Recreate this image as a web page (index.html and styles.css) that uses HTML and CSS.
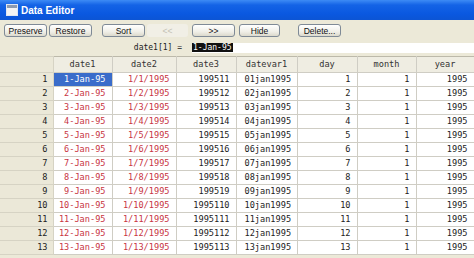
FILE: index.html
```html
<!DOCTYPE html>
<html lang="en">
<head>
    <meta charset="UTF-8">
    <title>Data Editor</title>
    <link rel="stylesheet" href="styles.css">
</head>
<body>
    <div class="window">
        <div class="titlebar">
            <span class="title-icon"></span>
            <span class="title-text">Data Editor</span>
        </div>
        <div class="toolbar">
            <button class="btn">Preserve</button>
            <button class="btn">Restore</button>
            <button class="btn gap-lg">Sort</button>
            <button class="btn disabled">&lt;&lt;</button>
            <button class="btn">&gt;&gt;</button>
            <button class="btn hide">Hide</button>
            <button class="btn gap-xl">Delete...</button>
        </div>
        <div class="editbar">
            <span class="edit-label">date1[1] =</span>
            <div class="edit-input"><span class="selected">1-Jan-95</span></div>
        </div>
        <table class="grid">
            <colgroup>
                <col style="width:53px"><col style="width:59px"><col style="width:64px"><col style="width:60px">
                <col style="width:61px"><col style="width:60px"><col style="width:59px"><col style="width:58px">
            </colgroup>
            <thead>
                <tr>
                    <th class="rownum"></th>
                    <th>date1</th>
                    <th>date2</th>
                    <th>date3</th>
                    <th>datevar1</th>
                    <th>day</th>
                    <th>month</th>
                    <th>year</th>
                </tr>
            </thead>
            <tbody id="rows">
                <!-- rows filled in below -->
            </tbody>
        </table>
    </div>

    <script>
        const tbody = document.getElementById('rows');
        for (let i = 1; i <= 13; i++) {
            const dd = (i < 10 ? '0' : '') + i;
            const row = `
                <tr>
                    <td class="rownum">${i}</td>
                    <td class="red ${i === 1 ? 'current' : ''}">${i}-Jan-95</td>
                    <td class="red">1/${i}/1995</td>
                    <td>19951${i}</td>
                    <td class="left">${dd}jan1995</td>
                    <td>${i}</td>
                    <td>1</td>
                    <td>1995</td>
                </tr>
            `;
            tbody.innerHTML += row;
        }
    </script>
</body>
</html>
```

FILE: styles.css
```css
body {
    margin: 0;
    padding: 0;
    background-color: #ece9d8;
    font-family: "Liberation Sans", Arial, sans-serif;
}
.window {
    width: 474px;
    height: 258px;
    overflow: hidden;
    background-color: #ece9d8;
}
.titlebar {
    height: 20px;
    display: flex;
    align-items: center;
    background: linear-gradient(#3d8bf5 0%, #1463e6 25%, #0a58e0 70%, #0c55d4 100%);
}
.title-icon {
    width: 10px;
    height: 10px;
    margin: 0 3px 0 6px;
    background: linear-gradient(#8c9ab0 0 3px, #f4f4f4 3px);
    border: 1px solid #dfe6f2;
}
.title-text {
    color: white;
    font-weight: bold;
    font-size: 10px;
}
.toolbar {
    height: 21px;
    display: flex;
    align-items: center;
    padding-left: 4px;
    background-color: #ece9d8;
}
.btn {
    width: 43px;
    height: 13px;
    margin-right: 2px;
    padding: 0;
    font-family: "Liberation Sans", Arial, sans-serif;
    font-size: 8.5px;
    color: #111;
    border: 1px solid #7f8a96;
    border-radius: 3px;
    background: linear-gradient(#ffffff, #f0efe8 60%, #dcd9cc);
}
.btn.gap-lg {
    margin-left: 8px;
}
.btn.disabled {
    color: #c4c1b4;
    border-color: transparent;
    background: #f1efe6;
    width: 41px;
    margin-right: 4px;
}
.btn.hide {
    width: 41px;
    margin-left: 2px;
}
.btn.gap-xl {
    margin-left: 16px;
}
.editbar {
    height: 15px;
    display: flex;
    align-items: flex-start;
    font-family: "DejaVu Sans Mono", monospace;
    font-size: 8px;
}
.edit-label {
    width: 182px;
    padding-right: 10px;
    text-align: right;
    line-height: 12px;
    margin-top: 1px;
    color: #222;
}
.edit-input {
    flex: 1;
    height: 10px;
    margin-top: 2px;
    background: white;
    line-height: 10px;
}
.selected {
    background: #111;
    color: white;
    padding: 0 1px;
}
.grid {
    width: 474px;
    table-layout: fixed;
    border-collapse: collapse;
    font-family: "DejaVu Sans Mono", monospace;
    font-size: 8.6px;
}
.grid th, .grid td {
    height: 13px;
    padding: 0 6px 0 0;
    line-height: 13px;
    border: 1px solid #cfcdc4;
    text-align: right;
    white-space: nowrap;
    overflow: hidden;
    color: #222;
    background: white;
}
.grid th {
    height: 15px;
    font-weight: normal;
    text-align: center;
    padding: 0;
    background-color: #efede2;
    color: #333;
    border-top-color: #bcb9aa;
}
.grid th:first-child, .grid td:first-child {
    border-left: none;
}
.grid .rownum {
    background-color: #ebe8d8;
    border-color: #d6d3c4;
    padding-right: 5px;
}
.grid .red {
    color: #c8343f;
}
.grid .left {
    text-align: left;
    padding-left: 8px;
}
.grid td.current {
    background-color: #3a6cca;
    color: white;
}
```
